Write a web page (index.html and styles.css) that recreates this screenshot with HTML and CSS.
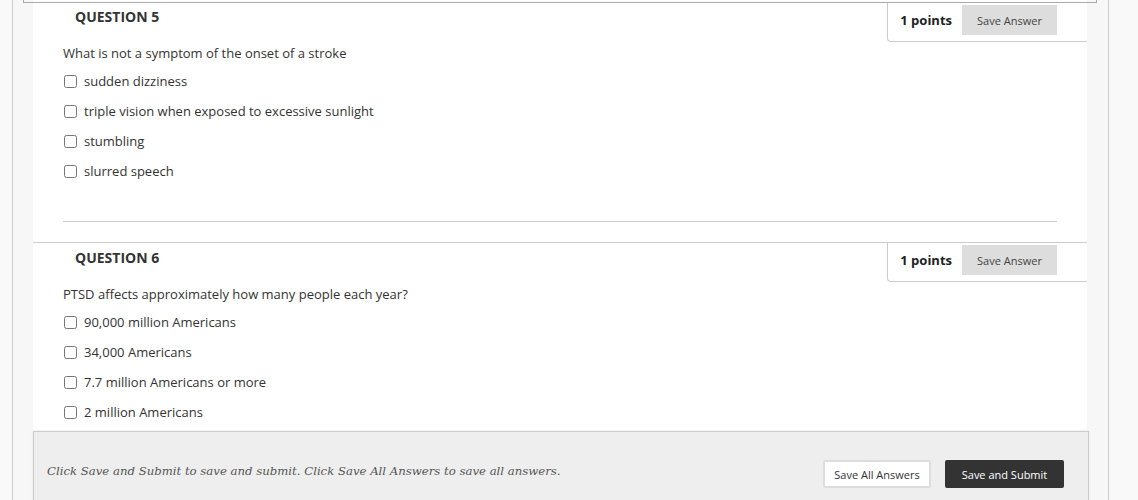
FILE: index.html
```html
<!DOCTYPE html>
<html lang="en">
<head>
    <meta charset="UTF-8">
    <meta name="viewport" content="width=device-width, initial-scale=1.0">
    <title>Take Test</title>
    <link rel="stylesheet" href="styles.css">
</head>
<body>

    <div class="page">
        <div class="content">
            <div class="prev-box"></div>

            <div class="question">
                <div class="question-head">
                    <h3 class="question-title">QUESTION 5</h3>
                    <div class="points-box">
                        <span class="points">1 points</span>
                        <button class="save-answer">Save Answer</button>
                    </div>
                </div>
                <p class="question-text">What is not a symptom of the onset of a stroke</p>
                <ul class="options">
                    <li><label><input type="checkbox"> sudden dizziness</label></li>
                    <li><label><input type="checkbox"> triple vision when exposed to excessive sunlight</label></li>
                    <li><label><input type="checkbox"> stumbling</label></li>
                    <li><label><input type="checkbox"> slurred speech</label></li>
                </ul>
                <hr class="separator">
            </div>

            <div class="question">
                <div class="question-head">
                    <h3 class="question-title">QUESTION 6</h3>
                    <div class="points-box">
                        <span class="points">1 points</span>
                        <button class="save-answer">Save Answer</button>
                    </div>
                </div>
                <p class="question-text">PTSD affects approximately how many people each year?</p>
                <ul class="options">
                    <li><label><input type="checkbox"> 90,000 million Americans</label></li>
                    <li><label><input type="checkbox"> 34,000 Americans</label></li>
                    <li><label><input type="checkbox"> 7.7 million Americans or more</label></li>
                    <li><label><input type="checkbox"> 2 million Americans</label></li>
                </ul>
            </div>

            <div class="submit-bar">
                <p class="submit-note">Click Save and Submit to save and submit. Click Save All Answers to save all answers.</p>
                <div class="submit-buttons">
                    <button class="btn-save-all">Save All Answers</button>
                    <button class="btn-submit">Save and Submit</button>
                </div>
            </div>
        </div>
    </div>

</body>
</html>
```

FILE: styles.css
```css
body {
    margin: 0;
    font-family: "Open Sans", Arial, sans-serif;
    color: #333;
    background-color: #f9f9f9;
}

.page {
    margin-left: 12px;
    width: 1054px;
    padding: 0 21px 0 20px;
    border-left: 1px solid #ccc;
    border-right: 1px solid #ccc;
    background-color: #f7f7f7;
}

.content {
    background-color: #fff;
}

.prev-box {
    margin: 0 -10px;
    height: 2px;
    border: 1px solid #aaa;
    border-top: none;
}

.question {
    padding-bottom: 20px;
}

.question + .question {
    border-top: 1px solid #ccc;
    padding-bottom: 4px;
}

.question-head {
    display: flex;
    justify-content: space-between;
    align-items: flex-start;
}

.question-title {
    margin: 0;
    padding: 4px 0 0 42px;
    font-size: 14px;
    line-height: 20px;
    font-weight: bold;
    color: #333;
}

.question + .question .question-title {
    padding-top: 5px;
}

.points-box {
    display: flex;
    align-items: center;
    gap: 10px;
    height: 34px;
    padding: 0 30px 4px 12px;
    border-left: 1px solid #ccc;
    border-bottom: 1px solid #ccc;
    border-bottom-left-radius: 4px;
}

.points {
    font-size: 13px;
    font-weight: bold;
    color: #222;
}

.save-answer {
    width: 95px;
    height: 30px;
    border: none;
    background-color: #ddd;
    color: #444;
    font-family: "Open Sans", Arial, sans-serif;
    font-size: 11px;
    cursor: pointer;
}

.question-text {
    margin: 1px 0 0 30px;
    font-size: 13px;
    line-height: 20px;
}

.question + .question .question-text {
    margin-top: 2px;
}

.options {
    list-style: none;
    margin: 3px 0 0 30px;
    padding: 0;
}

.options li {
    height: 30px;
    line-height: 30px;
    font-size: 13px;
}

.options label {
    display: flex;
    align-items: center;
    gap: 4px;
}

.options input {
    margin: 0 3px 0 1px;
    width: 13px;
    height: 13px;
}

.separator {
    margin: 35px 30px 0 30px;
    border: none;
    border-top: 1px solid #ccc;
}

.submit-bar {
    display: flex;
    justify-content: space-between;
    align-items: flex-start;
    margin-right: -2px;
    height: 80px;
    padding: 27px 24px 0 13px;
    border: 1px solid #ccc;
    background-color: #eee;
    box-shadow: 0 -1px 3px rgba(0, 0, 0, 0.06);
}

.submit-note {
    margin: 0;
    padding-top: 2px;
    font-family: "DejaVu Serif", Georgia, serif;
    font-style: italic;
    font-size: 11.7px;
    line-height: 20px;
    color: #555;
}

.submit-buttons {
    display: flex;
    gap: 14px;
    padding-top: 1px;
}

.btn-save-all,
.btn-submit {
    height: 28px;
    font-family: "Open Sans", Arial, sans-serif;
    font-size: 11px;
    border-radius: 2px;
    cursor: pointer;
}

.btn-save-all {
    width: 108px;
    background-color: #fff;
    color: #333;
    border: 2px solid #ddd;
}

.btn-submit {
    width: 119px;
    background-color: #333;
    color: #fff;
    border: none;
}
```
